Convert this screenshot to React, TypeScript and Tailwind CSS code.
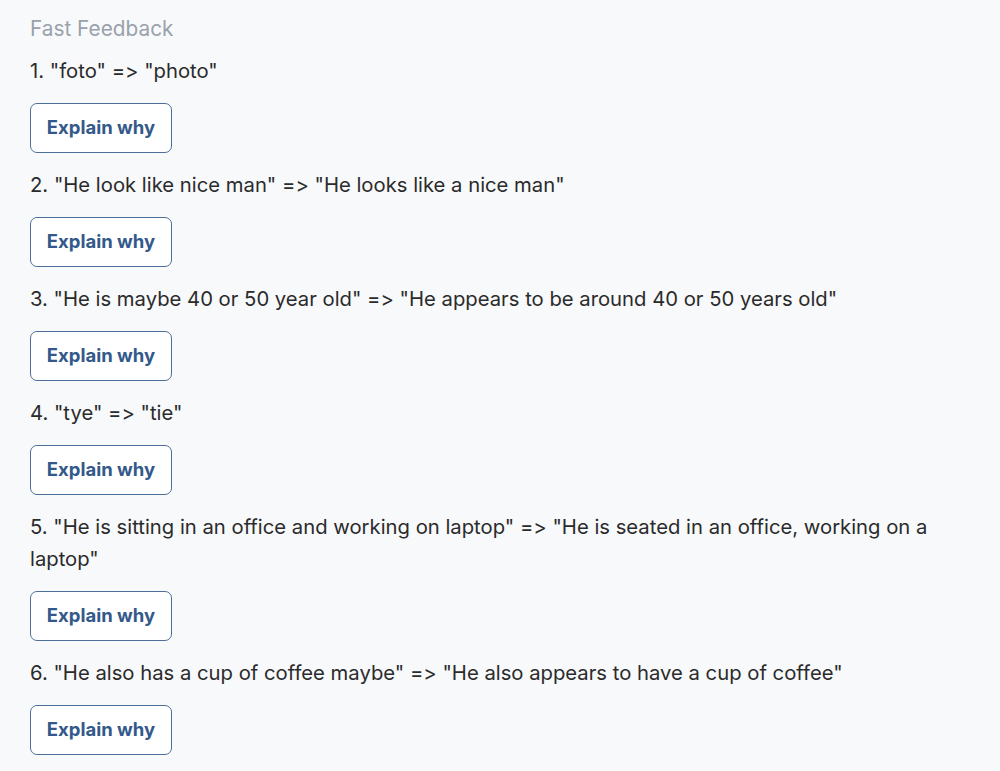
const items = [
  '"foto" => "photo"',
  '"He look like nice man" => "He looks like a nice man"',
  '"He is maybe 40 or 50 year old" => "He appears to be around 40 or 50 years old"',
  '"tye" => "tie"',
  '"He is sitting in an office and working on laptop" => "He is seated in an office, working on a laptop"',
  '"He also has a cup of coffee maybe" => "He also appears to have a cup of coffee"',
];

export default function App() {
  return (
    <div
      className="min-h-[771px] bg-[#f8f9fb] px-[30px] pt-[13px] text-[#2b2b2b] [font-feature-settings:'calt'_0,'liga'_0]"
      style={{ fontFamily: 'Inter, "Liberation Sans", sans-serif' }}
    >
      <h2 className="text-[20.8px] leading-[32px] text-[#9aa1ab]">Fast Feedback</h2>
      <div className="mt-[10px] flex flex-col gap-[16px]">
        {items.map((text, i) => (
          <div key={i} className="flex flex-col gap-[16px]">
            <p className="text-[20.25px] leading-[32px]">
              {i + 1}. {text}
            </p>
            <div>
              <button className="h-[50px] w-[142px] rounded-[7px] border border-[#4d6e98] bg-white text-[18.5px] font-bold text-[#33598a]">
                Explain why
              </button>
            </div>
          </div>
        ))}
      </div>
    </div>
  );
}
